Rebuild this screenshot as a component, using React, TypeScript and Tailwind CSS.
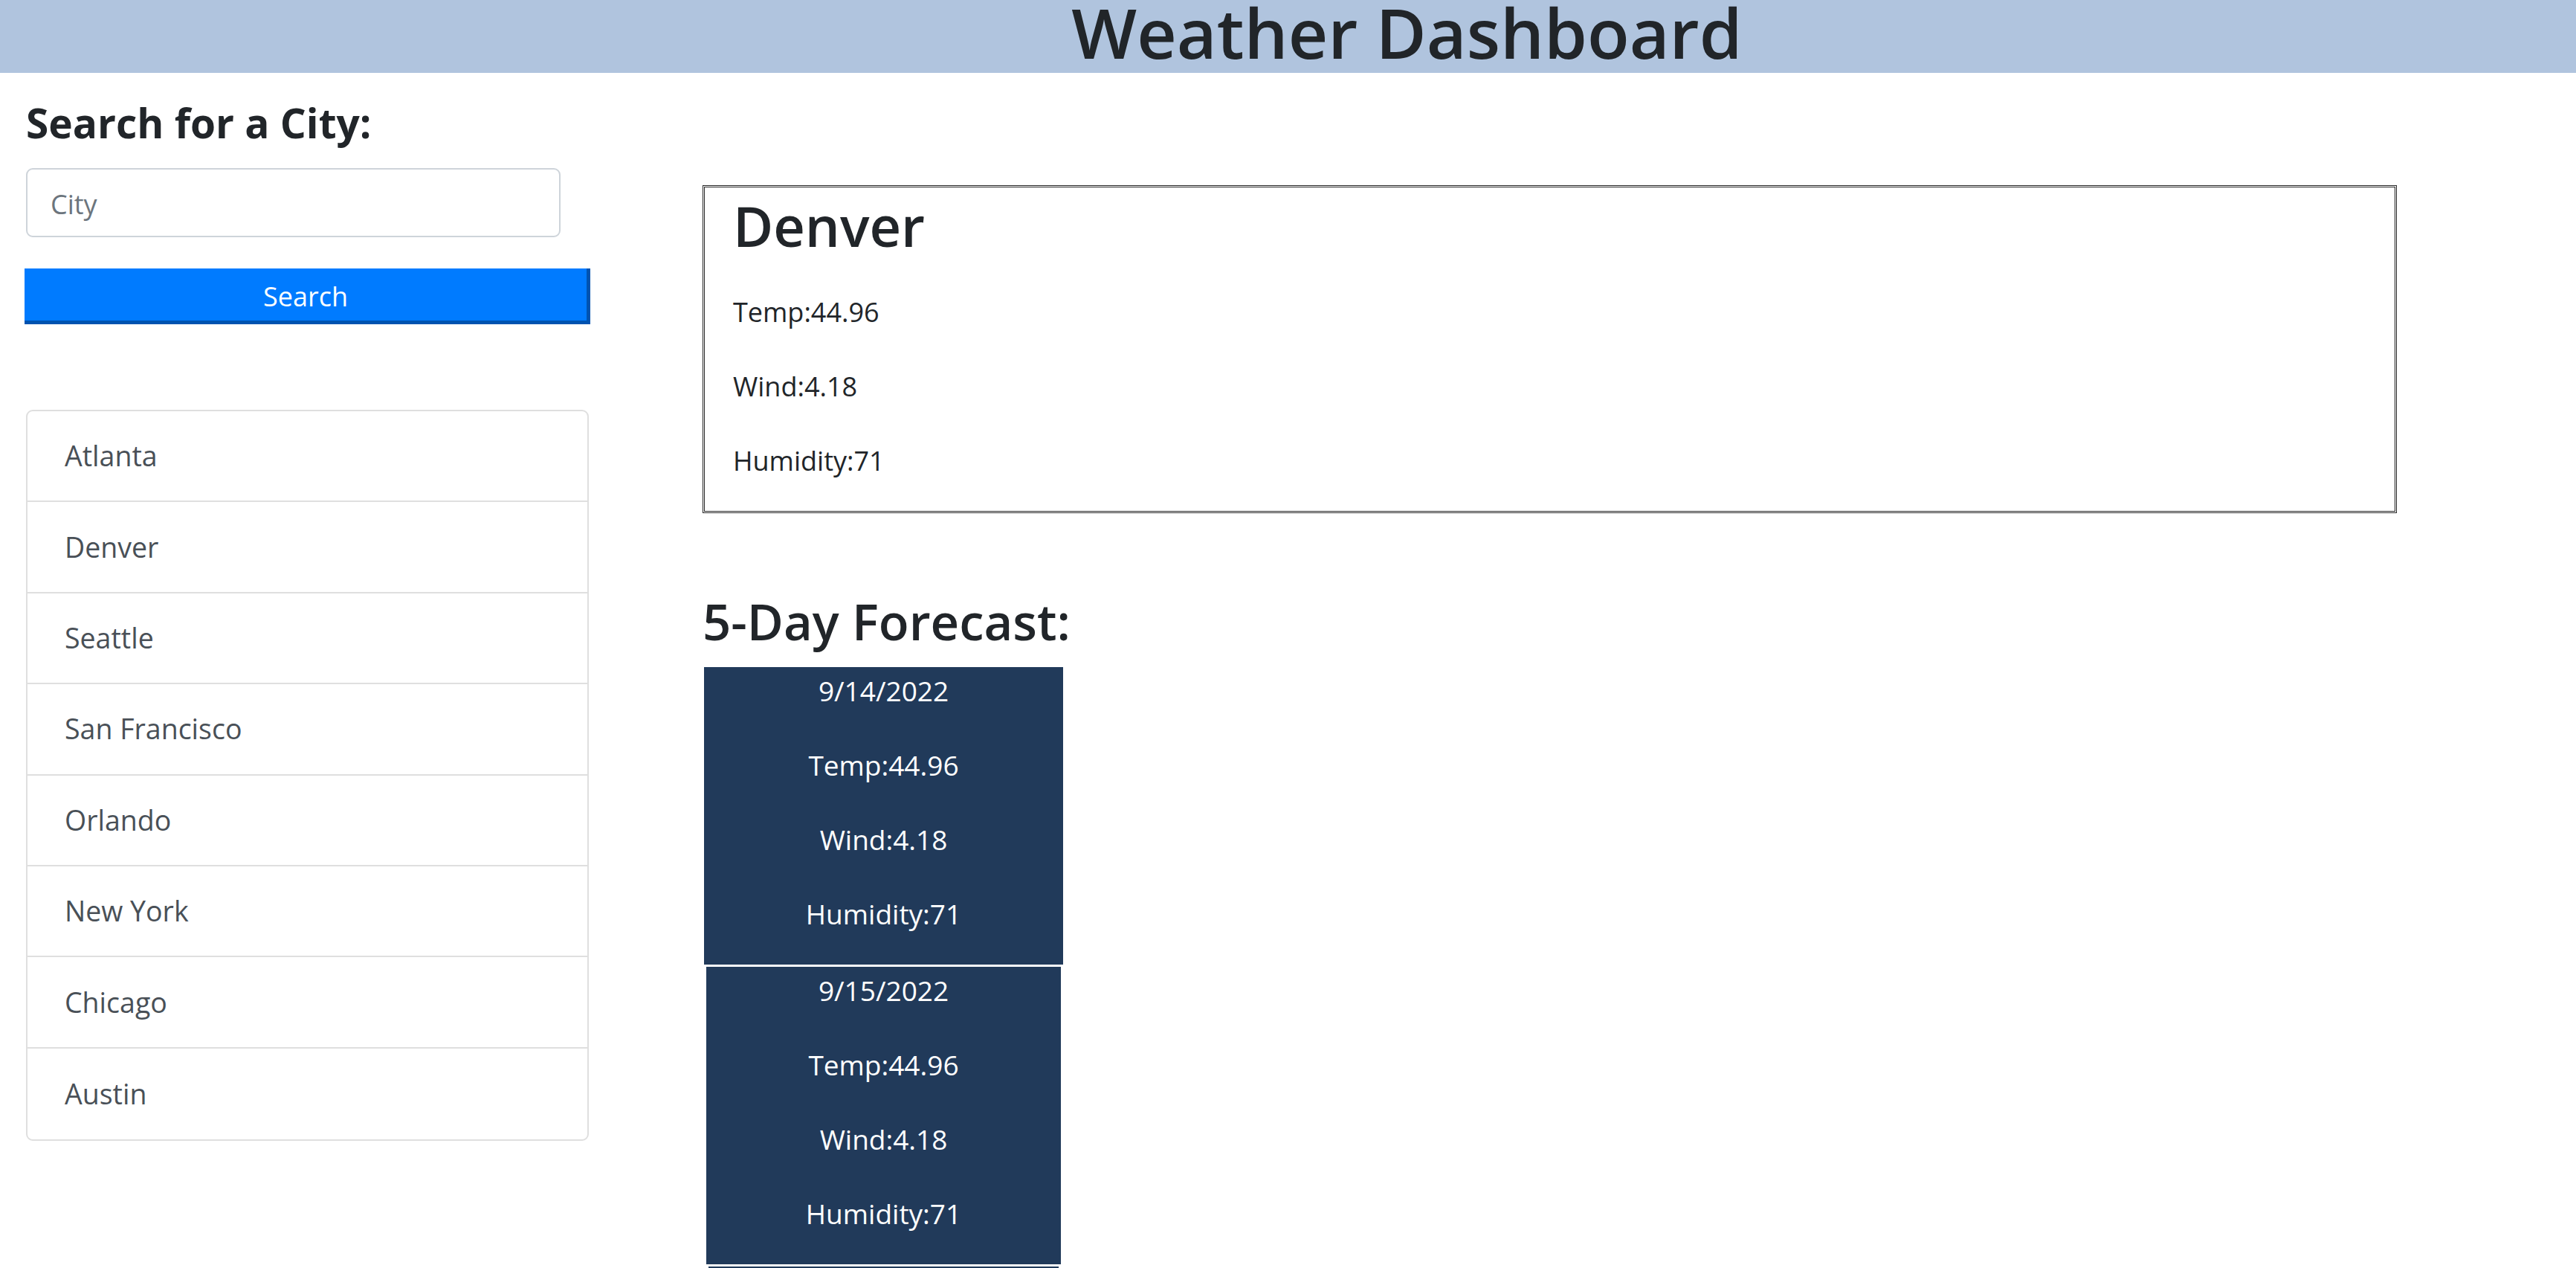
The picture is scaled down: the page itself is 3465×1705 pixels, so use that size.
import React from "react";

const CITIES = [
  "Atlanta",
  "Denver",
  "Seattle",
  "San Francisco",
  "Orlando",
  "New York",
  "Chicago",
  "Austin",
];

const FORECAST = [
  { date: "9/14/2022", temp: 44.96, wind: 4.18, humidity: 71 },
  { date: "9/15/2022", temp: 44.96, wind: 4.18, humidity: 71 },
  { date: "9/16/2022", temp: 44.96, wind: 4.18, humidity: 71 },
  { date: "9/17/2022", temp: 44.96, wind: 4.18, humidity: 71 },
  { date: "9/18/2022", temp: 44.96, wind: 4.18, humidity: 71 },
];

// each card sits a little further in than the one above it
const CARD_INSET = [
  "mx-[2px] mt-0",
  "mx-[5px] mt-[3px]",
  "mx-[8px] mt-[3px]",
  "mx-[11px] mt-[3px]",
  "mx-[14px] mt-[3px]",
];

const FONT = "font-['Open_Sans','Noto_Sans',sans-serif]";

function SearchPanel() {
  return (
    <aside className="w-[760px] shrink-0">
      <h3 className="mt-[31px] text-[55px] font-bold leading-[72px] text-[#212529]">
        Search for a City:
      </h3>
      <input
        type="text"
        placeholder="City"
        className="mt-[25px] block h-[93px] w-[719px] rounded-[9px] border-2 border-[#ced4da] bg-white px-[31px] pt-[3px] text-[36px] text-[#495057] outline-none placeholder:text-[#6c757d]"
      />
      <button
        type="button"
        className="-ml-[2px] mt-[42px] block h-[75px] w-[761px] border-b-[5px] border-r-[5px] border-[#0053b0] bg-[#007bff] pt-[6px] text-[36px] leading-[54px] text-white"
      >
        Search
      </button>
      <ul className="mt-[115px] w-[757px] rounded-[9px] border-2 border-[#dfdfdf]">
        {CITIES.map((city, i) => (
          <li
            key={city}
            className={`flex h-[122.4px] items-center pl-[50px] text-[37.5px] leading-[54px] text-[#495057] ${
              i < CITIES.length - 1 ? "border-b-2 border-[#dfdfdf]" : ""
            }`}
          >
            {city}
          </li>
        ))}
      </ul>
    </aside>
  );
}

function CurrentWeather() {
  return (
    <section className="mt-[151px] h-[441px] w-[2279px] border-[3px] border-double border-[#262626] pb-[40px] pl-[38px] pt-[5px]">
      <h2 className="text-[74px] font-semibold leading-[94px] text-[#212529]">Denver</h2>
      <div className="mt-[41px] flex flex-col gap-[44px] text-[36px] leading-[56px] text-[#212529]">
        <p>Temp:44.96</p>
        <p>Wind:4.18</p>
        <p>Humidity:71</p>
      </div>
    </section>
  );
}

function ForecastCard({ day, index }: { day: (typeof FORECAST)[number]; index: number }) {
  return (
    <div
      className={`flex h-[400px] flex-col items-center gap-[36px] bg-[#213a5a] text-[37px] leading-[64px] text-white ${CARD_INSET[index]}`}
    >
      <p>{day.date}</p>
      <p>Temp:{day.temp}</p>
      <p>Wind:{day.wind}</p>
      <p>Humidity:{day.humidity}</p>
    </div>
  );
}

export default function App() {
  return (
    <div className={`min-h-screen bg-white ${FONT}`}>
      <header className="h-[98px] bg-[#b0c4de] pl-[320px] text-center">
        <h1 className="text-[93px] font-semibold leading-[86px] text-[#212529]">Weather Dashboard</h1>
      </header>

      <main className="flex gap-[150px] pl-[35px]">
        <SearchPanel />

        <div className="flex flex-col">
          <CurrentWeather />

          <h2 className="mt-[102px] text-[67px] font-semibold leading-[86px] text-[#212529]">
            5-Day Forecast:
          </h2>
          <div className="mt-[19px] w-[487px]">
            {FORECAST.map((day, i) => (
              <ForecastCard key={day.date} day={day} index={i} />
            ))}
          </div>
        </div>
      </main>
    </div>
  );
}
